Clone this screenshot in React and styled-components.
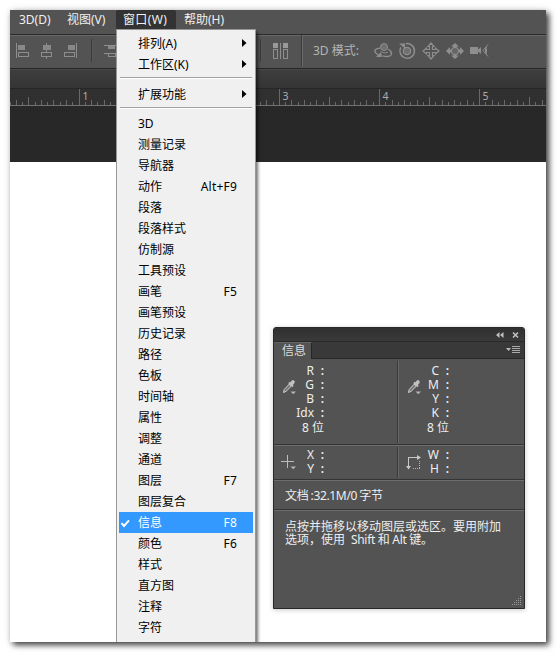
import React from "react";
import styled, { createGlobalStyle, css } from "styled-components";

const GlobalStyle = createGlobalStyle`
  *, *::before { box-sizing: border-box; }
  body {
    margin: 0;
    background: #fff;
    overflow: hidden;
    font-family: "Noto Sans", "Noto Sans CJK SC", sans-serif;
    font-size: 12px;
  }
`;

const Page = styled.div`
  width: 557px;
  height: 653px;
  padding: 10px;
`;

const Window = styled.div`
  position: relative;
  display: flex;
  flex-direction: column;
  width: 536px;
  height: 632px;
  background: #fff;
  box-shadow: 3px 3px 6px rgba(0, 0, 0, 0.75), 0 0 8px rgba(0, 0, 0, 0.1);
`;

const MenuBar = styled.div`
  display: flex;
  height: 24px;
  padding-left: 1px;
  background: #535353;
`;

const MenuTitle = styled.div`
  width: ${(p) => p.$width}px;
  height: 19px;
  padding-left: 8px;
  line-height: 19px;
  white-space: nowrap;
  color: #f0f0f0;
  border-radius: 2px 2px 0 0;
  ${(p) => p.$open && css`background: #333; padding-left: 7px; letter-spacing: 0.35px;`}
`;

const Toolbar = styled.div`
  display: flex;
  align-items: center;
  height: 34px;
  padding: 0 0 2px 5px;
  background: #535353;
  border-top: 1px solid #2b2b2b;
  box-shadow: inset 0 1px #686868;
`;

const ToolIcon = styled.svg`
  display: block;
  flex: none;
  width: ${(p) => p.$w || 16}px;
  height: 18px;
  margin-right: ${(p) => p.$gap ?? 8}px;
  fill: none;
  stroke: #8e8e8e;
`;

const ToolDivider = styled.div`
  flex: none;
  width: 2px;
  height: ${(p) => (p.$tall ? 31 : 23)}px;
  margin-right: ${(p) => p.$gap}px;
  border-left: 1px solid #3b3b3b;
  border-right: 1px solid ${(p) => (p.$tall ? "#6b6b6b" : "#575757")};
`;

const ModeLabel = styled.div`
  width: 60px;
  color: #b4b4b4;
  line-height: 18px;
  white-space: nowrap;
`;

const DocTabs = styled.div`
  height: 21px;
  background: linear-gradient(#3e3e3e, #353535);
  border-top: 1px solid #252525;
  border-bottom: 1px solid #262626;
  box-shadow: inset 0 1px #484848;
`;

const Ruler = styled.svg`
  display: block;
  width: 536px;
  height: 17px;
  background: #303030;
  text { font: 10.5px "Noto Sans", sans-serif; fill: #adadad; }
`;

const Pasteboard = styled.div`
  height: 56px;
  background: #282828;
`;

const Dropdown = styled.div`
  position: absolute;
  left: 106px;
  top: 19px;
  width: 140px;
  height: 613px;
  padding: 3px 2px 0;
  background: #f0f0f0;
  border: 1px solid #979797;
  border-bottom: 0;
  clip-path: inset(0 -6px 0 0);
  box-shadow: 2px 3px 3px rgba(0, 0, 0, 0.55);
`;

const Item = styled.div`
  display: grid;
  grid-template-columns: 19px 1fr 40px 16px;
  align-items: center;
  height: 21px;
  line-height: 21px;
  white-space: nowrap;
  color: ${(p) => (p.$active ? "#fff" : "#000")};
  background: ${(p) => (p.$active ? "#3399ff" : "transparent")};
`;

const Shortcut = styled.span`
  display: flex;
  justify-content: flex-end;
  letter-spacing: 0.2px;
`;

const MarkIcon = styled.svg`
  display: block;
  width: 12px;
  height: 12px;
`;

const Separator = styled.div`
  height: ${(p) => p.$space}px;
  padding-top: 2px;
  &::before {
    content: "";
    display: block;
    height: 2px;
    margin: 0 1px;
    background: #a0a0a0;
    border-bottom: 1px solid #fff;
  }
`;

const Panel = styled.div`
  position: absolute;
  left: 263px;
  top: 317px;
  width: 252px;
  height: 282px;
  display: flex;
  flex-direction: column;
  background: #535353;
  border: 1px solid #282828;
  border-radius: 3px 3px 0 0;
  color: #eee;
  box-shadow: 0 1px 5px rgba(0, 0, 0, 0.22);
  overflow: hidden;
`;

const PanelHead = styled.div`
  display: flex;
  justify-content: flex-end;
  align-items: center;
  height: 14px;
  background: linear-gradient(#303030, #3a3a3a);
  border-bottom: 1px solid #292929;
`;

const HeadIcons = styled.svg`
  width: 32px;
  height: 13px;
`;

const TabRow = styled.div`
  display: flex;
  justify-content: space-between;
  height: 17px;
  background: #393939;
`;

const Tab = styled.div`
  width: 38px;
  height: 17px;
  padding-left: 8px;
  line-height: 16px;
  white-space: nowrap;
  color: #dcdcdc;
  background: #535353;
  border-top: 1px solid #666;
  border-right: 1px solid #262626;
`;

const TabFill = styled.div`
  flex: 1;
  display: flex;
  justify-content: flex-end;
  border-bottom: 1px solid #292929;
`;

const FlyoutIcon = styled.svg`
  width: 20px;
  height: 16px;
`;

const Readouts = styled.div`
  display: flex;
  height: ${(p) => p.$h}px;
  border-bottom: 1px solid #343434;
  ${(p) => p.$lit && css`box-shadow: inset 0 1px #6d6d6d;`}
`;

const Readout = styled.div`
  display: flex;
  width: ${(p) => p.$w}px;
  padding-top: ${(p) => p.$top}px;
`;

const SourceIcon = styled.svg`
  display: block;
  flex: none;
  width: 16px;
  height: 18px;
  margin: ${(p) => p.$top}px 0 0 7px;
  fill: none;
`;

const Values = styled.div`
  flex: none;
  width: 32px;
  line-height: 14px;
`;

const Channel = styled.div`
  display: grid;
  grid-template-columns: 17px 15px;
  height: 14px;
  span { justify-self: end; white-space: nowrap; }
  span + span { padding-right: 5px; font-weight: 600; }
`;

const Depth = styled.div`
  height: 14px;
  padding: 1px 0 0 5px;
  line-height: 14px;
  white-space: nowrap;
`;

const ColumnRule = styled.div`
  flex: none;
  width: 2px;
  margin: 2px 0 1px;
  border-left: 1px solid #3a3a3a;
  border-right: 1px solid #686868;
`;

const DocSize = styled.div`
  height: 30px;
  padding-left: 11px;
  line-height: 31px;
  letter-spacing: -0.35px;
  word-spacing: -0.5px;
  border-bottom: 1px solid #343434;
  box-shadow: inset 0 1px #6d6d6d;
`;

const Hint = styled.div`
  flex: 1;
  display: flex;
  flex-direction: column;
  padding: 10px 0 0 11px;
  line-height: 13px;
  white-space: pre;
  box-shadow: inset 0 1px #6d6d6d;
`;

const Keys = styled.span`
  letter-spacing: -0.3px;
`;

const Grip = styled.svg`
  align-self: flex-end;
  width: 12px;
  height: 12px;
  margin: auto 1px 1px 0;
`;

const MENUS = [
  { title: "3D(D)", width: 48 },
  { title: "视图(V)", width: 57 },
  { title: "窗口(W)", width: 60, open: true },
  { title: "帮助(H)", width: 60 },
];

const ITEMS = [
  { label: "排列(A)", sub: true },
  { label: "工作区(K)", sub: true },
  { space: 9 },
  { label: "扩展功能", sub: true },
  { space: 8 },
  { label: "3D" },
  { label: "测量记录" },
  { label: "导航器" },
  { label: "动作", key: "Alt+F9" },
  { label: "段落" },
  { label: "段落样式" },
  { label: "仿制源" },
  { label: "工具预设" },
  { label: "画笔", key: "F5" },
  { label: "画笔预设" },
  { label: "历史记录" },
  { label: "路径" },
  { label: "色板" },
  { label: "时间轴" },
  { label: "属性" },
  { label: "调整" },
  { label: "通道" },
  { label: "图层", key: "F7" },
  { label: "图层复合" },
  { label: "信息", key: "F8", active: true },
  { label: "颜色", key: "F6" },
  { label: "样式" },
  { label: "直方图" },
  { label: "注释" },
  { label: "字符" },
];

const AlignIcon = ({ line, box, fill, gap }) => (
  <ToolIcon viewBox="0 0 16 18" $gap={gap} shapeRendering="crispEdges">
    <path d={line} />
    <path d={fill} fill="#888" stroke="none" />
    <path d={box} fill="#535353" />
  </ToolIcon>
);

const Submenu = () => (
  <MarkIcon viewBox="0 0 12 12">
    <path d="M5 1v8l4.500-4z" fill="#000" />
  </MarkIcon>
);

const Check = () => (
  <MarkIcon viewBox="0 0 12 12">
    <path d="M2.500 6.200 5 9 10 3.400" fill="none" stroke="#fff" strokeWidth="2" />
  </MarkIcon>
);

function InchRuler() {
  const ticks = [];
  for (let i = -11; i <= 74; i++) {
    const x = Math.floor(69 + i * 6.26) + 0.5;
    const top = i % 16 === 0 ? 0 : i % 8 === 0 ? 8 : i % 2 === 0 ? 11 : 13;
    ticks.push(`M${x} ${top}V16`);
  }
  return (
    <Ruler viewBox="0 0 536 17">
      <path d={ticks.join("")} stroke="#686868" fill="none" />
      <path d="M0 16.500H536" stroke="#727272" />
      {[1, 3, 4, 5].map((n) => (
        <text key={n} x={72.5 + (n - 1) * 100} y="11">{n}</text>
      ))}
    </Ruler>
  );
}

const Eyedropper = () => (
  <SourceIcon viewBox="0 0 16 18" $top={14}>
    <path d="M2.500 14.500 3.200 11.500 8.600 5.800 10.600 7.900 5 13.400z" fill="#777" stroke="#d0d0d0" />
    <path d="M8 4.500 12 8.500" stroke="#c0c0c0" strokeWidth="2" />
    <path d="M10 6.200 12 4" stroke="#c0c0c0" strokeWidth="3.600" strokeLinecap="round" />
    <path d="M9.500 13.500h5.500l-2.750 2.800z" fill="#b4b4b4" />
  </SourceIcon>
);

const Crosshair = () => (
  <SourceIcon viewBox="0 0 16 18" $top={5}>
    <path d="M0 8.500h13M6.500 2v13" stroke="#bcbcbc" shapeRendering="crispEdges" />
    <path d="M9.500 13.500h5.500l-2.750 2.800z" fill="#b4b4b4" />
  </SourceIcon>
);

const Extent = () => (
  <SourceIcon viewBox="0 0 16 18" $top={5}>
    <path d="M2.500 14V4.500H12" stroke="#c8c8c8" shapeRendering="crispEdges" />
    <path d="M11 2l4 2.500-4 2.500zM0 13h5l-2.500 3.500z" fill="#c8c8c8" />
    <path d="M13.500 8v7.500M7 15.500h8" stroke="#b4b4b4" strokeDasharray="1 1" shapeRendering="crispEdges" />
  </SourceIcon>
);

const ReadoutGroup = ({ icon, labels, depth, top, width }) => (
  <Readout $top={top} $w={width}>
    {icon}
    <Values>
      {labels.map((l) => (
        <Channel key={l}>
          <span>{l}</span>
          <span>:</span>
        </Channel>
      ))}
      {depth && <Depth>8 位</Depth>}
    </Values>
  </Readout>
);

const GRIP_DOTS = [0, 1, 2, 3, 4].flatMap((r) =>
  Array.from({ length: r + 1 }, (_, c) => [9 - c * 2, 1 + r * 2])
);

function InfoPanel() {
  return (
    <Panel>
      <PanelHead>
        <HeadIcons viewBox="0 0 32 13">
          <path d="M7.500 4v6L4 7zM11.500 4v6L8 7z" fill="#c0c0c0" />
          <path d="m21 4.500 5 5m0-5-5 5" stroke="#c0c0c0" strokeWidth="1.600" />
        </HeadIcons>
      </PanelHead>
      <TabRow>
        <Tab>信息</Tab>
        <TabFill>
          <FlyoutIcon viewBox="0 0 20 16">
            <path d="M2 6h5L4.500 9z" fill="#bbb" />
            <path d="M8 4.500h8M8 6.500h8M8 8.500h8M8 10.500h8" stroke="#a9a9a9" shapeRendering="crispEdges" />
          </FlyoutIcon>
        </TabFill>
      </TabRow>
      <Readouts $h={86}>
        <ReadoutGroup width={123} top={5} icon={<Eyedropper />} labels={["R", "G", "B", "Idx"]} depth />
        <ColumnRule />
        <ReadoutGroup width={124} top={5} icon={<Eyedropper />} labels={["C", "M", "Y", "K"]} depth />
      </Readouts>
      <Readouts $h={35} $lit>
        <ReadoutGroup width={123} top={3} icon={<Crosshair />} labels={["X", "Y"]} />
        <ColumnRule />
        <ReadoutGroup width={124} top={3} icon={<Extent />} labels={["W", "H"]} />
      </Readouts>
      <DocSize>文档 :32.1M/0 字节</DocSize>
      <Hint>
        <span>点按并拖移以移动图层或选区。要用附加</span>
        <span>选项，使用 <Keys> Shift 和 Alt 键。</Keys></span>
        <Grip viewBox="0 0 12 12">
          {GRIP_DOTS.map(([x, y]) => (
            <rect key={`${x}-${y}`} x={x} y={y} width="1" height="1" fill="#999" />
          ))}
        </Grip>
      </Hint>
    </Panel>
  );
}

export default function App() {
  return (
    <Page>
      <GlobalStyle />
      <Window lang="zh-CN">
        <MenuBar>
          {MENUS.map((m) => (
            <MenuTitle key={m.title} $width={m.width} $open={m.open}>{m.title}</MenuTitle>
          ))}
        </MenuBar>
        <Toolbar>
          <AlignIcon line="M1.500 1v15" fill="M3 3h7v5H3z" box="M3.500 10.500h10v4h-10z" />
          <AlignIcon line="M7.500 1v16" fill="M4 3h8v5H4z" box="M2.500 10.500h10v4h-10z" />
          <AlignIcon line="M13.500 1v15" fill="M5 3h7v5H5z" box="M1.500 10.500h10v4h-10z" gap={12} />
          <ToolDivider $gap={11} />
          <AlignIcon line="M0 3.500h14M0 11.500h14" fill="M4 4h7v3H4z" box="M4.500 11.500h7v3h-7z" gap={140} />
          <ToolDivider $gap={11} />
          <ToolIcon viewBox="0 0 16 18" $gap={12} shapeRendering="crispEdges">
            <path d="M0 1h5v5H0zM10 1h5v5h-5z" fill="#999" stroke="none" />
            <path d="M.5 7.500h4v9h-4zM10.500 7.500h4v9h-4zM7.500 1v16" />
          </ToolIcon>
          <ToolDivider $tall $gap={10} />
          <ModeLabel>3D 模式:</ModeLabel>
          <ToolIcon viewBox="0 0 20 18" $w={20} $gap={4}>
            <path d="M7 6.200C3 6 1 8.500 2.300 10.300c.8 1.200 2 2 3.200 2.500M9.500 13.800c3.500 1.200 7.500 1 8.500-.8 1-2-.5-4.500-3-6" strokeWidth="1.400" />
            <path d="M3 15h6l-1-5z" fill="#8e8e8e" stroke="none" />
            <path d="M7.500 9c2 2.300 5 2.500 7.500 1" />
            <circle cx="11" cy="5" r="3.500" fill="#707070" />
          </ToolIcon>
          <ToolIcon viewBox="0 0 20 18" $w={20} $gap={4}>
            <path d="M3.800 5.300a7.300 7.300 0 1 0 5-3.600" strokeWidth="1.500" />
            <path d="M2 1.500h6v5z" fill="#8e8e8e" stroke="none" />
            <circle cx="10" cy="9" r="3.700" fill="#707070" strokeWidth="1.300" />
          </ToolIcon>
          <ToolIcon viewBox="0 0 20 18" $w={20} $gap={4}>
            <path d="M10 1 13 4.500h-1.500v3h3V6L18 9l-3.500 3v-1.500h-3v3H13L10 17l-3-3.500h1.500v-3h-3V12L2 9l3.500-3v1.500h3v-3H7z" strokeWidth="1.200" />
          </ToolIcon>
          <ToolIcon viewBox="0 0 20 18" $w={20} $gap={4}>
            <path d="m10 1 4 3.500h-2.500V6h-3V4.500H6zM10 17l4-3.500h-2.500V12h-3v1.500H6zM1 9l4-4v2.500h2v3H5V13zM19 9l-4-4v2.500h-2v3h2V13z" fill="#8e8e8e" stroke="none" />
            <circle cx="10" cy="9" r="3.600" fill="#666" strokeWidth="1.200" />
          </ToolIcon>
          <ToolIcon viewBox="0 0 20 18" $w={20} $gap={0}>
            <path d="M1 5h8v7H1zM8 8.500l4-3.500v7z" fill="#8e8e8e" stroke="none" />
            <path d="m19 2.500-5 6 5 6M17.500 5c-1.400 2-1.400 5 0 7" />
            <path d="M17 6.500v4" strokeWidth="2" />
          </ToolIcon>
        </Toolbar>
        <DocTabs />
        <InchRuler />
        <Pasteboard />
        <InfoPanel />
        <Dropdown>
          {ITEMS.map((it, i) =>
            it.space ? (
              <Separator key={i} $space={it.space} />
            ) : (
              <Item key={i} $active={it.active}>
                <span>{it.active && <Check />}</span>
                <span>{it.label}</span>
                <Shortcut>{it.key}</Shortcut>
                <span>{it.sub && <Submenu />}</span>
              </Item>
            )
          )}
        </Dropdown>
      </Window>
    </Page>
  );
}
